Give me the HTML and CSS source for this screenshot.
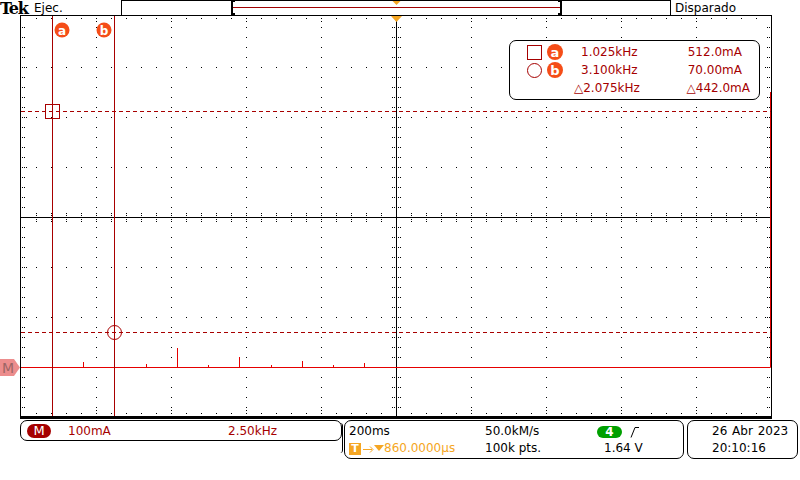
FILE: index.html
```html
<!DOCTYPE html>
<html lang="es">
<head>
  <meta charset="UTF-8" />
  <title>Tek - Cursores</title>
  <meta name="viewport" content="width=800, initial-scale=1.0" />
  <link rel="stylesheet" href="styles.css">
</head>
<body>

<div class="top-bar">
  <span class="logo">Tek</span>
  <span class="mode">Ejec.</span>
  <div class="record">
    <!-- record length bar with the visible window bracketed -->
    <svg width="550" height="15" viewBox="0 0 550 15">
      <rect x="0" y="0" width="550" height="1" fill="#000" />
      <rect x="0" y="0" width="1" height="15" fill="#000" />
      <rect x="549" y="0" width="1" height="15" fill="#000" />
      <rect x="112" y="7" width="327" height="1" fill="#a00000" />
      <path d="M110 0h4v2h-2v11h2v2h-4z" fill="#000" />
      <path d="M441 0h-4v2h2v11h-2v2h4z" fill="#000" />
      <polygon points="271.5,1 279.5,1 275.5,5" fill="#f5a623" />
    </svg>
  </div>
  <span class="status">Disparado</span>
</div>

<div class="scope">
  <svg id="screen" width="800" height="405" viewBox="0 15 800 405">
    <!-- frame -->
    <rect x="20" y="15" width="752" height="1" fill="#000" />
    <rect x="20" y="15" width="1" height="403" fill="#000" />
    <rect x="771" y="15" width="1" height="403" fill="#000" />
    <rect x="20" y="416" width="752" height="3" fill="#000" />
    <!-- centre cross -->
    <rect x="20" y="217" width="752" height="1" fill="#000" />
    <rect x="396" y="15" width="1" height="402" fill="#000" />
    <path id="graticule" fill="#000" d="" />

    <!-- trigger position -->
    <polygon points="391,16 402,16 396.5,22" fill="#f5a623" />

    <!-- channel trace -->
    <g stroke="#e60000" stroke-width="1" fill="none">
      <path d="M21 367.5H770.5V92" />
      <path d="M83.5 367V362M114.5 367V358M146.5 367V364M177.5 367V348M208.5 367V365M239.5 367V357M271.5 367V365M302.5 367V361M333.5 367V365M364.5 367V363" />
    </g>

    <!-- cursors -->
    <g stroke="#a80000" stroke-width="1" fill="none">
      <path d="M21 111.5H771M21 332.5H771" stroke-dasharray="4 3" />
      <path d="M52.5 16V416M114.5 16V416" />
      <rect x="45.5" y="104.5" width="14" height="14" />
      <circle cx="114.5" cy="332.5" r="7" />
    </g>
    <g class="cursor-tag">
      <circle cx="62" cy="30" r="7.5" />
      <text x="62" y="34.5">a</text>
      <circle cx="104" cy="30" r="7.5" />
      <text x="104" y="34.5">b</text>
    </g>

    <!-- math waveform ground marker -->
    <polygon points="0,359 14,359 20,367.5 14,376 0,376" fill="#ec8d8d" />
    <text class="m-tag" x="8" y="372.5">M</text>
  </svg>

  <div class="readout">
    <div class="marks"><span class="mark-square"></span><span class="badge">a</span></div>
    <div class="freq">1.025kHz</div>
    <div class="amp">512.0mA</div>

    <div class="marks"><span class="mark-circle"></span><span class="badge">b</span></div>
    <div class="freq">3.100kHz</div>
    <div class="amp">70.00mA</div>

    <div class="marks"></div>
    <div class="freq delta">△2.075kHz</div>
    <div class="amp delta">△442.0mA</div>
  </div>
</div>

<div class="bottom-bar">
  <div class="panel vert">
    <span class="math-pill">M</span>
    <span class="v-scale">100mA</span>
    <span>2.50kHz</span>
  </div>

  <div class="panel horiz">
    <span>200ms</span>
    <span>50.0kM/s</span>
    <span class="trig-src">
      <span class="ch-pill">4</span>
      <svg class="edge" width="9" height="12" viewBox="0 0 9 12">
        <path d="M1 11.5L5 1.5H9" stroke="#000" stroke-width="1" fill="none" />
      </svg>
    </span>

    <span class="delay">
      <span class="t-box">T</span>
      <svg width="22" height="12" viewBox="0 0 22 12">
        <path d="M1 6.5H10" stroke="#f5a623" stroke-width="1" />
        <path d="M8 3.5L11 6.5L8 9.5" stroke="#f5a623" stroke-width="1" fill="none" />
        <polygon points="12,2 22,2 17,8" fill="#f5a623" />
      </svg>
      <span>860.0000µs</span>
    </span>
    <span>100k pts.</span>
    <span class="trig-level">1.64 V</span>
  </div>

  <div class="panel clock">
    <span>26 Abr 2023</span>
    <span>20:10:16</span>
  </div>
</div>

<script>
  // graticule: dotted divisions (75 x 50 px), edge ticks and centre-cross ticks
  const dots = [];
  const dot = (x, y) => dots.push(`M${x} ${y}h1v1h-1z`);

  const cols = [];
  const rows = [];
  for (let i = 1; i < 50; i++) cols.push(21 + 15 * i);
  for (let j = 1; j < 40; j++) rows.push(17 + 10 * j);
  const majorX = x => (x - 21) % 75 === 0;
  const majorY = y => (y - 17) % 50 === 0;

  for (let k = 1; k < 10; k++) {
    if (k === 5) continue;
    rows.forEach(y => dot(21 + 75 * k, y));
  }
  for (let m = 1; m < 8; m++) {
    if (m === 4) continue;
    cols.forEach(x => dot(x, 17 + 50 * m));
  }

  rows.forEach(y => {
    const big = majorY(y);
    [22, 24].concat(big ? [26] : []).forEach(x => dot(x, y));
    [769, 767].concat(big ? [765] : []).forEach(x => dot(x, y));
    [392, 394, 398, 400].forEach(x => dot(x, y));
  });
  cols.forEach(x => {
    const big = majorX(x);
    [18].concat(big ? [21] : []).forEach(y => dot(x, y));
    [413].concat(big ? [410] : []).forEach(y => dot(x, y));
    [213, 215, 219, 221].forEach(y => dot(x, y));
  });

  document.getElementById('graticule').setAttribute('d', dots.join(''));
</script>

</body>
</html>
```

FILE: styles.css
```css
html, body {
  margin: 0; padding: 0;
  background: #fff;
}

body {
  width: 800px; height: 480px;
  overflow: hidden;
  font-family: "DejaVu Sans", sans-serif;
  font-size: 12px;
  color: #000;
}

/* ---- top status line ---- */
.top-bar {
  display: flex;
  align-items: flex-start;
  height: 15px;
}

.logo {
  width: 34px;
  font-family: "DejaVu Serif", serif;
  font-weight: bold;
  font-size: 16px;
  line-height: 18px;
  letter-spacing: -1.2px;
}

.mode {
  width: 87px;
  line-height: 17px;
}

.record { width: 550px; height: 15px; }
.record svg { display: block; }

.status {
  margin-left: 4px;
  line-height: 17px;
}

/* ---- waveform area ---- */
.scope {
  position: relative;
  height: 405px;
}

#screen { display: block; }

.cursor-tag circle { fill: #f54d18; }
.cursor-tag text {
  fill: #fff;
  font-family: "DejaVu Sans", sans-serif;
  font-weight: bold;
  font-size: 12px;
  text-anchor: middle;
}

.m-tag {
  fill: #9c6565;
  font-family: "DejaVu Sans", sans-serif;
  font-size: 14px;
  text-anchor: middle;
}

.readout {
  position: absolute;
  left: 509px; top: 25px;
  width: 251px; height: 60px;
  box-sizing: border-box;
  padding: 2px 17px 0 17px;
  background: #fff;
  border: 1px solid #000;
  border-radius: 7px;
  display: grid;
  grid-template-columns: 54px 1fr auto;
  grid-auto-rows: 18px;
  line-height: 18px;
  color: #a50000;
}

.marks {
  display: flex;
  align-items: center;
  gap: 5px;
}

.mark-square, .mark-circle {
  width: 15px; height: 15px;
  box-sizing: border-box;
  border: 1px solid #a50000;
}
.mark-circle { border-radius: 50%; }

.badge {
  display: inline-flex;
  justify-content: center;
  align-items: center;
  width: 16px; height: 16px;
  border-radius: 50%;
  background: #f54d18;
  color: #fff;
  font-weight: bold;
  font-size: 13px;
  line-height: 1;
}

.amp { text-align: right; }
.freq.delta { margin-left: -7px; }
.amp.delta { margin-right: -8px; }

/* ---- bottom readouts ---- */
.bottom-bar {
  display: flex;
  align-items: flex-start;
  padding-left: 20px;
}

.panel {
  box-sizing: border-box;
  border: 1px solid #000;
  border-radius: 7px;
}

.vert {
  width: 322px; height: 21px;
  display: flex;
  align-items: center;
  padding-left: 6px;
  color: #a50000;
}

.math-pill {
  display: inline-flex;
  justify-content: center;
  align-items: center;
  width: 24px; height: 14px;
  border-radius: 7px;
  background: #a50000;
  color: #fff;
  font-size: 13px;
  line-height: 1;
}

.v-scale {
  width: 160px;
  margin-left: 17px;
}

.horiz, .clock {
  height: 39px;
  display: grid;
  grid-auto-rows: 17px;
  line-height: 17px;
  padding-top: 2px;
}

.horiz {
  position: relative;
  width: 340px;
  margin-left: 2px;
  padding-left: 4px;
  grid-template-columns: 136px 112px 1fr;
}

/* left edge of the vertical panel runs on below it */
.horiz::before {
  content: "";
  position: absolute;
  left: -5px; top: 2px; bottom: 5px;
  width: 2px;
  border-right: 1px solid #000;
  border-radius: 0 6px 6px 0;
}

.trig-src {
  display: flex;
  align-items: center;
}

.ch-pill {
  display: inline-flex;
  justify-content: center;
  align-items: center;
  width: 25px; height: 12px;
  border-radius: 6px;
  background: #00a000;
  color: #fff;
  font-weight: bold;
  font-size: 12px;
  line-height: 1;
}

.edge { margin-left: 8px; }

.delay {
  display: flex;
  align-items: center;
  color: #f5a623;
  white-space: nowrap;
}

.delay svg { margin-left: 1px; }

.t-box {
  display: inline-flex;
  justify-content: center;
  align-items: center;
  width: 12px; height: 12px;
  background: #f5a623;
  color: #fff;
  font-weight: bold;
  font-size: 11px;
  line-height: 1;
}

.trig-level { padding-left: 7px; }

.clock {
  width: 111px;
  margin-left: 3px;
  padding-left: 24px;
  word-spacing: 1px;
}
```
